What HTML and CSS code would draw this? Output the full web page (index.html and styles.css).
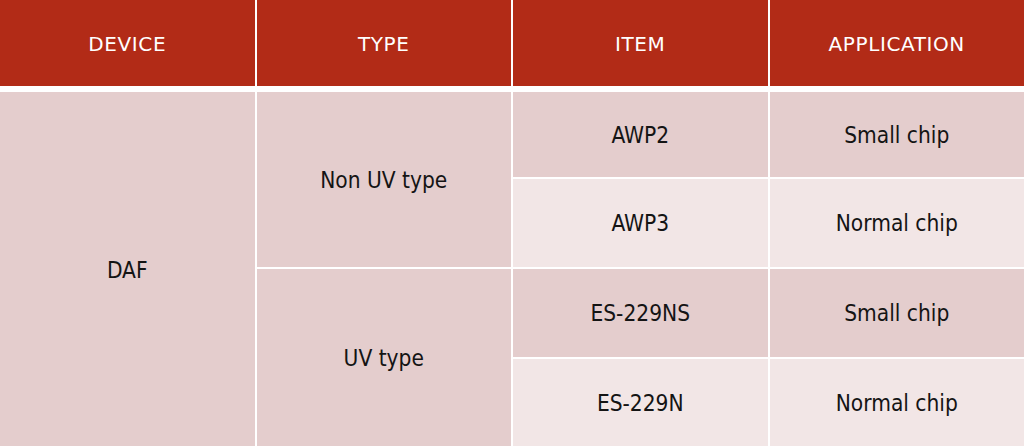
FILE: index.html
```html
<!DOCTYPE html>
<html lang="en">
<head>
<meta charset="utf-8">
<title>Device table</title>
<link rel="stylesheet" href="styles.css">
</head>
<body>
<div class="table">
  <div class="head">
    <div class="th">DEVICE</div>
    <div class="th">TYPE</div>
    <div class="th">ITEM</div>
    <div class="th">APPLICATION</div>
  </div>
  <div class="body">
    <div class="td dark device">DAF</div>
    <div class="td dark type-a">Non UV type</div>
    <div class="td dark">AWP2</div>
    <div class="td dark">Small chip</div>
    <div class="td light">AWP3</div>
    <div class="td light">Normal chip</div>
    <div class="td dark type-b">UV type</div>
    <div class="td dark">ES-229NS</div>
    <div class="td dark">Small chip</div>
    <div class="td light">ES-229N</div>
    <div class="td light">Normal chip</div>
  </div>
</div>
</body>
</html>
```

FILE: styles.css
```css
html, body {
  margin: 0;
  padding: 0;
  background: #ffffff;
}

.table {
  width: 1024px;
  height: 446px;
  overflow: hidden;
  display: flex;
  flex-direction: column;
  gap: 6px;
}

.head {
  flex: none;
  display: grid;
  grid-template-columns: repeat(4, 1fr);
  column-gap: 2px;
  height: 86px;
}

.th {
  background: #b22b17;
  color: #ffffff;
  font-family: "DejaVu Sans", sans-serif;
  font-size: 20px;
  letter-spacing: 0.6px;
  display: flex;
  align-items: center;
  justify-content: center;
  padding-top: 2px;
}

.body {
  flex: none;
  display: grid;
  grid-template-columns: repeat(4, 1fr);
  grid-template-rows: 85px 88px 88px 88px;
  gap: 2px;
}

.td {
  font-family: "DejaVu Sans Condensed", "DejaVu Sans", sans-serif;
  font-stretch: condensed;
  font-size: 22.5px;
  color: #141414;
  display: flex;
  align-items: center;
  justify-content: center;
}

.dark {
  background: #e4cdcd;
}

.light {
  background: #f2e6e6;
}

.device {
  grid-row: 1 / span 4;
}

.type-a {
  grid-row: 1 / span 2;
}

.type-b {
  grid-row: 3 / span 2;
}
```
